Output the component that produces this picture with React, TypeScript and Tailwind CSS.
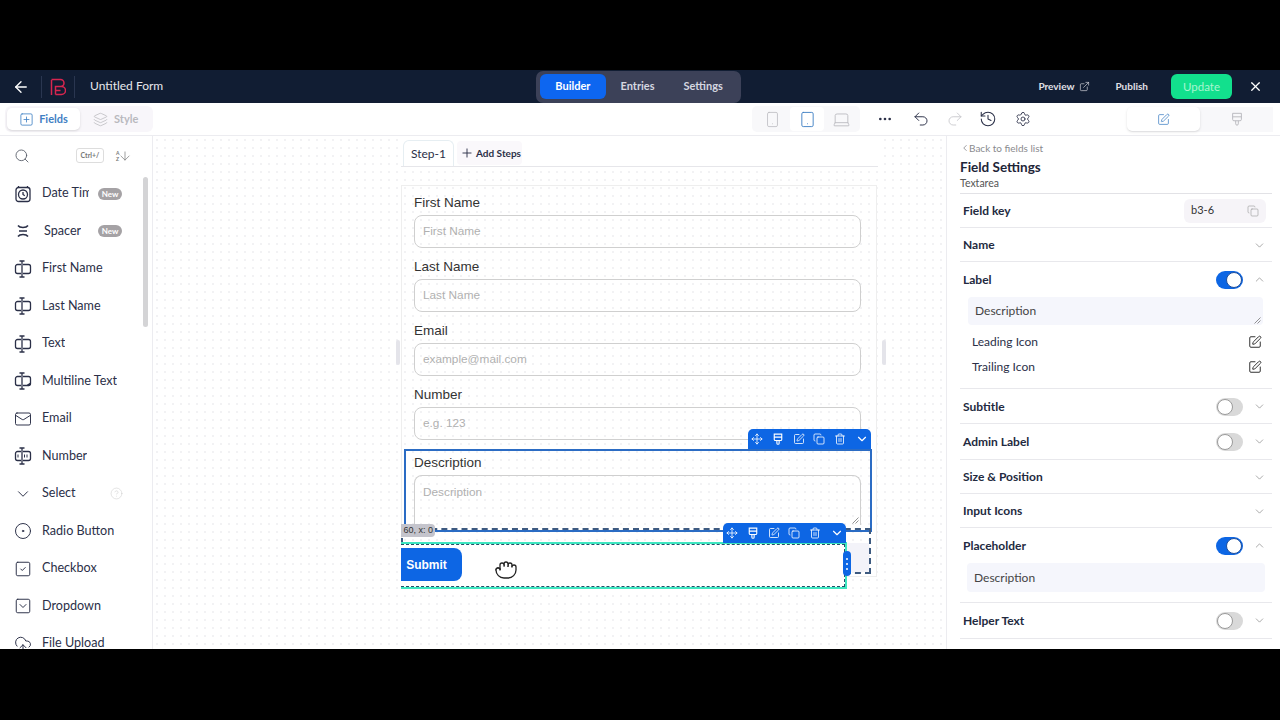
import {
  ArrowLeft,
  ArrowDown,
  ChevronDown,
  ChevronLeft,
  ChevronUp,
  CircleDot,
  CircleHelp,
  CloudUpload,
  Copy,
  ExternalLink,
  Grab,
  History,
  Laptop,
  Layers,
  Mail,
  MoreHorizontal,
  Move,
  Plus,
  Redo2,
  Search,
  Settings,
  Smartphone,
  SquareCheck,
  SquareChevronDown,
  SquarePen,
  SquarePlus,
  Tablet,
  Trash2,
  Undo2,
  X,
} from "lucide-react";
import type { ReactNode } from "react";

function Logo() {
  return (
    <svg width="16" height="18" viewBox="0 0 16 18" fill="none" stroke="#d8264f" strokeWidth="1.500">
      <path d="M1.500 2v15M1.500 1.500h9a3 3 0 0 1 0 7h-5v8M5.500 8.500h6a4 4 0 0 1 0 8h-6M5.500 12.500h5" />
    </svg>
  );
}

function BrushIcon({ size = 12, color = "white", width = 1.5 }: { size?: number; color?: string; width?: number }) {
  return (
    <svg width={size} height={size} viewBox="0 0 16 16" fill="none" stroke={color} strokeWidth={width}>
      <path d="M3 1.500h10v7a1.500 1.500 0 0 1-1.500 1.500h-7A1.500 1.500 0 0 1 3 8.500zM3 5.500h10M6.500 10v3.500a1.500 1.500 0 0 0 3 0V10" />
    </svg>
  );
}

function ResizeGrip({ className }: { className: string }) {
  return (
    <svg width="7" height="7" viewBox="0 0 7 7" fill="none" stroke="#777777" strokeWidth="0.800" className={`absolute ${className}`}>
      <path d="M0.500 6.500l6-6M3.500 6.500l3-3" />
    </svg>
  );
}

function InputIcon({ multi, digits }: { multi?: boolean; digits?: boolean }) {
  return (
    <svg width="18" height="18" viewBox="0 0 18 18" fill="none" stroke="#2b3048" strokeWidth="1.300">
      <path d="M7 4.500H3.500a2 2 0 0 0-2 2v5a2 2 0 0 0 2 2H7M9 4.500h5.500a2 2 0 0 1 2 2v5a2 2 0 0 1-2 2H9M8 1v16M5.500 1h5M5.500 17h5" />
      {multi && <path d="M16.500 11.500l-3 2" strokeWidth="2" />}
      {digits && <path d="M4 7.500v3M10.500 7.500v3M13 7.500v3" strokeWidth="1" />}
    </svg>
  );
}

function DateIcon() {
  return (
    <svg width="16" height="18" viewBox="0 0 16 18" fill="none" stroke="#2b3048" strokeWidth="1.300">
      <rect x="1" y="2.500" width="14" height="14" rx="2.500" />
      <path d="M3.500 1v2M12.500 1v2" />
      <circle cx="8" cy="9.500" r="4.500" />
      <path d="M8 7v2.500l1.800 1.200" />
    </svg>
  );
}

function SpacerIcon() {
  return (
    <svg width="14" height="14" viewBox="0 0 14 14" fill="none" stroke="#2b3048" strokeWidth="1.500">
      <path d="M2 1.500c1 1.500 2 2 5 2s4-.5 5-2M2 12.500c1-1.500 2-2 5-2s4 .5 5 2M3 7h8" />
    </svg>
  );
}

const stroke = { size: 18, strokeWidth: 1.3, color: "#2b3048" };

const FIELDS: { name: string; icon: ReactNode; badge?: "new" | "help"; clip?: boolean; indent?: boolean }[] = [
  { name: "Date Time", icon: <DateIcon />, badge: "new", clip: true },
  { name: "Spacer", icon: <SpacerIcon />, badge: "new", indent: true },
  { name: "First Name", icon: <InputIcon /> },
  { name: "Last Name", icon: <InputIcon /> },
  { name: "Text", icon: <InputIcon /> },
  { name: "Multiline Text", icon: <InputIcon multi /> },
  { name: "Email", icon: <Mail {...stroke} /> },
  { name: "Number", icon: <InputIcon digits /> },
  { name: "Select", icon: <ChevronDown {...stroke} /> , badge: "help" },
  { name: "Radio Button", icon: <CircleDot {...stroke} /> },
  { name: "Checkbox", icon: <SquareCheck {...stroke} /> },
  { name: "Dropdown", icon: <SquareChevronDown {...stroke} /> },
  { name: "File Upload", icon: <CloudUpload {...stroke} /> },
];

function FieldsPanel() {
  return (
    <aside className="relative w-[153px] shrink-0 overflow-hidden border-r border-[#ececf0]">
      <div className="flex h-[39px] items-center pl-[14px]">
        <Search size={16} strokeWidth={1.3} color="#555a66" />
        <span className="ml-[46px] flex h-[15px] w-[28px] items-center justify-center rounded-[3px] border border-[#dddddd] text-[7px] font-bold text-[#777777]">
          Ctrl+/
        </span>
        <span className="ml-[12px] flex items-center text-[#777777]">
          <span className="flex flex-col text-[5px] font-bold leading-[6px]">
            <span>A</span>
            <span>Z</span>
          </span>
          <ArrowDown size={14} strokeWidth={1.2} color="#777777" className="-ml-[1px]" />
        </span>
      </div>
      {FIELDS.map((f) => (
        <div key={f.name} className="flex h-[37.5px] items-center">
          <span className="flex w-[42px] shrink-0 justify-center pl-[14px] pr-[10px]">{f.icon}</span>
          <span
            className={`overflow-hidden whitespace-nowrap text-[12.600px] text-[#2b3048] ${
              f.clip ? "w-[47px]" : ""
            } ${f.indent ? "ml-[2px]" : ""}`}
          >
            {f.name}
          </span>
          {f.badge === "new" && (
            <span
              className={`flex h-[12px] w-[24px] items-center justify-center rounded-full bg-[#a5a2a5] text-[8px] font-bold text-white ${
                f.clip ? "ml-[9px]" : "ml-[17px]"
              }`}
            >
              New
            </span>
          )}
          {f.badge === "help" && <CircleHelp size={13} strokeWidth={1} color="#cccccc" className="ml-[34px]" />}
        </div>
      ))}
      <div className="absolute left-[143px] top-[41px] h-[150px] w-[5px] rounded-full bg-[#d4d4d6]" />
    </aside>
  );
}

function FormField({ label, placeholder }: { label: string; placeholder: string }) {
  return (
    <div className="h-[64px] px-[12px] pt-[8px]">
      <div className="h-[21px] text-[13.500px] leading-[18px] text-[#333333]">{label}</div>
      <div className="flex h-[33px] w-[447px] items-center rounded-[8px] border border-[#cfcfcf] px-[8px] text-[11.800px] text-[#b0b0b0]">
        {placeholder}
      </div>
    </div>
  );
}

function FieldToolbar({ className }: { className: string }) {
  const s = { size: 12, strokeWidth: 1.6, color: "white" };
  return (
    <div className={`absolute flex h-[20px] w-[123px] items-center justify-between rounded-t-[5px] bg-[#0d66e4] pl-[3px] pr-[2px] ${className}`}>
      <Move {...s} />
      <BrushIcon />
      <SquarePen {...s} />
      <Copy {...s} />
      <Trash2 {...s} />
      <ChevronDown size={14} strokeWidth={2} color="white" />
    </div>
  );
}

function Canvas() {
  return (
    <main className="relative flex-1 overflow-hidden bg-[radial-gradient(#f2f2f4_1px,transparent_1px)] bg-[length:8px_8px] pl-[248px]">
      <div className="flex h-[31px] w-[477px] items-end border-b border-[#e6e6ea] bg-white">
        <span className="ml-[2px] flex h-[26px] w-[51px] items-center justify-center rounded-t-[6px] border border-b-0 border-[#e6eef2] text-[12px] text-[#2b3048]">
          Step-1
        </span>
        <span className="mb-[1px] ml-[3px] flex h-[24px] w-[65px] items-center gap-[2px] whitespace-nowrap rounded-[4px] bg-[#faf8fb] pl-[3px] text-[10px] font-bold text-[#2b3048]">
          <Plus size={14} strokeWidth={1.6} />
          Add Steps
        </span>
      </div>

      <div className="relative mt-[18px] h-[392px] w-[476px] border border-[#eeeeee] font-['Liberation_Sans',sans-serif]">
        <FormField label="First Name" placeholder="First Name" />
        <FormField label="Last Name" placeholder="Last Name" />
        <FormField label="Email" placeholder="example@mail.com" />
        <FormField label="Number" placeholder="e.g. 123" />

        <div className="ml-[2px] mt-[7px] h-[83px] w-[468px] border-2 border-[#2b6cc4] px-[8px] pt-[3px]">
          <div className="h-[21px] text-[13.500px] leading-[18px] text-[#333333]">Description</div>
          <div className="relative h-[50px] w-[447px] rounded-t-[8px] border border-b-0 border-[#cfcfcf] px-[8px] pt-[8px] text-[11.800px] text-[#b0b0b0]">
            Description
            <ResizeGrip className="bottom-[1px] right-[1px]" />
          </div>
        </div>

        <FieldToolbar className="left-[346px] top-[243px]" />

        {/* element being dragged: drop slot, ghost and its own toolbar */}
        <div className="absolute left-[-1px] top-[342px] h-[46px] w-[470px] border-2 border-dashed border-[#3d5a80]">
          <div className="ml-auto mt-[13px] h-[29px] w-[23px] bg-[#f3f3f9]" />
        </div>
        <div className="absolute left-[-1px] top-[356px] h-[47px] w-[446px] border-y-2 border-r-2 border-[#3ee6c0] bg-white">
          <div className="h-full border-y border-r border-dashed border-[#24506a]">
            <div className="mt-[3px] flex h-[33px] w-[61px] items-center justify-center rounded-r-[8px] bg-[#0d66e4] pr-[10px] text-[12px] font-bold text-white">
              Submit
            </div>
          </div>
        </div>
        <FieldToolbar className="left-[321px] top-[337px]" />
        <div className="absolute left-[-1px] top-[338px] flex h-[13px] w-[34px] items-center justify-end overflow-hidden whitespace-nowrap rounded-r-[4px] bg-[#c4c4cc] pr-[2px] text-[9px] text-[#333333]">
          y: 60, x: 0
        </div>
        <div className="absolute left-[441px] top-[365px] flex h-[25px] w-[8px] flex-col items-center justify-center gap-[3px] rounded-full bg-[#0d66e4]">
          <span className="h-[2px] w-[2px] rounded-full bg-white" />
          <span className="h-[2px] w-[2px] rounded-full bg-white" />
          <span className="h-[2px] w-[2px] rounded-full bg-white" />
        </div>
        <Grab size={24} strokeWidth={1.3} color="#222222" fill="white" className="absolute left-[92px] top-[370px]" />
      </div>

      <div className="absolute left-[243px] top-[204px] h-[25px] w-[4px] rounded-full bg-[#e4e4ea]" />
      <div className="absolute left-[729px] top-[204px] h-[25px] w-[4px] rounded-full bg-[#e4e4ea]" />
    </main>
  );
}

function Toggle({ on }: { on?: boolean }) {
  return (
    <span
      className={`mr-[9px] flex h-[18px] w-[27px] items-center rounded-full ${
        on ? "justify-end bg-[#0d66e4] pr-[1px]" : "justify-start bg-[#d9d9d9] pl-[1px]"
      }`}
    >
      <span className={`h-[16px] w-[16px] rounded-full bg-white ${on ? "border border-[#1f4f9c]" : "border border-[#9a9a9a]"}`} />
    </span>
  );
}

function SettingRow({
  label,
  h,
  toggle,
  open,
  children,
}: {
  label: string;
  h: string;
  toggle?: "on" | "off";
  open?: boolean;
  children?: ReactNode;
}) {
  return (
    <div className={`border-b border-[#e8e8ec] ${h}`}>
      <div className={`flex items-center pl-[3px] ${toggle ? "h-[35px]" : "h-[34px]"}`}>
        <span className="flex-1 text-[12px] font-bold text-[#232a40]">{label}</span>
        {toggle && <Toggle on={toggle === "on"} />}
        <span className="mr-[6px] flex w-[14px] justify-center">
          {open ? (
            <ChevronUp size={13} strokeWidth={1.3} color="#888888" />
          ) : (
            <ChevronDown size={13} strokeWidth={1.3} color="#888888" />
          )}
        </span>
      </div>
      {children}
    </div>
  );
}

function IconLine({ label }: { label: string }) {
  return (
    <div className="flex h-[25px] items-center pl-[12px] pr-[10px] text-[12px] text-[#2b3048]">
      <span className="flex-1">{label}</span>
      <SquarePen size={14} strokeWidth={1.6} color="#222222" />
    </div>
  );
}

function SettingsPanel() {
  return (
    <aside className="w-[334px] shrink-0 overflow-hidden border-l border-[#ececf0] pl-[13px] pr-[8px]">
      <div className="h-[58px] border-b border-[#e2e2e6] pt-[5px]">
        <div className="flex h-[14px] items-center text-[10px] text-[#8a8a8e]">
          <ChevronLeft size={10} />
          <span className="ml-[-1px]">Back to fields list</span>
        </div>
        <div className="mt-[3px] text-[13.500px] font-bold leading-[18px] text-[#1e2538]">Field Settings</div>
        <div className="text-[10.500px] leading-[14px] text-[#555555]">Textarea</div>
      </div>

      <div className="flex h-[34px] items-center border-b border-[#e8e8ec] pl-[3px]">
        <span className="flex-1 text-[12px] font-bold text-[#232a40]">Field key</span>
        <span className="mr-[6px] flex h-[24px] w-[82px] items-center justify-between rounded-[6px] bg-[#f6f4f8] px-[7px] text-[11px] text-[#333333]">
          b3-6
          <Copy size={12} strokeWidth={1.2} color="#999999" />
        </span>
      </div>
      <SettingRow label="Name" h="h-[34px]" />
      <SettingRow label="Label" h="h-[127px]" toggle="on" open>
        <div className="relative ml-[8px] flex h-[28px] w-[295px] items-center rounded-[4px] bg-[#f5f6fc] pl-[7px] text-[12px] text-[#444444]">
          Description
          <ResizeGrip className="bottom-[1px] right-[2px]" />
        </div>
        <div className="mt-[4px]">
          <IconLine label="Leading Icon" />
          <IconLine label="Trailing Icon" />
        </div>
      </SettingRow>
      <SettingRow label="Subtitle" h="h-[35px]" toggle="off" />
      <SettingRow label="Admin Label" h="h-[36px]" toggle="off" />
      <SettingRow label="Size & Position" h="h-[34px]" />
      <SettingRow label="Input Icons" h="h-[34px]" />
      <SettingRow label="Placeholder" h="h-[75px]" toggle="on" open>
        <div className="ml-[7px] flex h-[29px] w-[298px] items-center rounded-[4px] bg-[#f5f6fc] pl-[7px] text-[12px] text-[#444444]">
          Description
        </div>
      </SettingRow>
      <SettingRow label="Helper Text" h="h-[36px]" toggle="off" />
    </aside>
  );
}

function Header() {
  return (
    <header className="flex h-[33px] items-center bg-[#111d33] text-white">
      <span className="flex h-[22px] w-[42px] items-center justify-center border-r border-[#2a3650]">
        <ArrowLeft size={18} strokeWidth={1.8} />
      </span>
      <span className="flex h-[22px] w-[33px] items-center justify-center border-r border-[#2a3650]">
        <Logo />
      </span>
      <span className="mb-[2px] ml-[15px] w-[72px] whitespace-nowrap text-[12px] text-[#e8e8ec]">Untitled Form</span>

      <nav className="ml-[374px] flex h-[32px] w-[205px] items-center rounded-[7px] bg-[#3c4158] px-[4px] text-[11px] font-bold text-[#d5d7e0]">
        <span className="flex h-[25px] w-[66px] items-center justify-center rounded-[6px] bg-[#0d66f0] text-white">Builder</span>
        <span className="w-[64px] text-center">Entries</span>
        <span className="w-[68px] text-center">Settings</span>
      </nav>

      <span className="ml-auto flex items-center gap-[5px] text-[10px] font-bold text-[#e0e0e6]">
        Preview
        <ExternalLink size={11} strokeWidth={1.4} />
      </span>
      <span className="ml-[25px] text-[10px] font-bold text-[#e0e0e6]">Publish</span>
      <span className="ml-[23px] flex h-[25px] w-[61px] items-center justify-center rounded-[6px] bg-[#12e08d] text-[11.500px] text-[#a8f5d0]">
        Update
      </span>
      <span className="ml-[16px] mr-[17px]">
        <X size={15} strokeWidth={2} color="white" />
      </span>
    </header>
  );
}

function Toolbar() {
  return (
    <div className="flex h-[33px] items-center border-b border-[#ececf0] bg-white">
      <div className="ml-[5px] flex h-[26px] w-[148px] items-center rounded-[6px] bg-[#f8f6fa] pl-[2px]">
        <span className="flex h-[22px] w-[73px] items-center justify-center gap-[5px] rounded-[5px] bg-white text-[11px] font-bold text-[#3f80c4] shadow-sm">
          <SquarePlus size={15} strokeWidth={1.3} color="#3f80c4" />
          Fields
        </span>
        <span className="ml-[13px] flex items-center gap-[6px] text-[11px] font-bold text-[#b9b9be]">
          <Layers size={15} strokeWidth={1.2} color="#b9b9be" />
          Style
        </span>
      </div>

      <div className="ml-[599px] flex h-[26px] w-[108px] items-center rounded-[5px] bg-[#f8f8fa] pl-[2px]">
        <span className="flex w-[36px] justify-center">
          <Smartphone size={17} strokeWidth={1.1} color="#b9b9be" />
        </span>
        <span className="flex h-[24px] w-[34px] items-center justify-center rounded-[4px] bg-white">
          <Tablet size={17} strokeWidth={1.3} color="#3f80c4" />
        </span>
        <span className="flex w-[34px] justify-center">
          <Laptop size={19} strokeWidth={1.1} color="#b9b9be" />
        </span>
      </div>

      <MoreHorizontal size={16} strokeWidth={2} color="#2b3048" className="ml-[17px]" />
      <Undo2 size={18} strokeWidth={1.3} color="#2b3048" className="ml-[19px]" />
      <Redo2 size={18} strokeWidth={1.1} color="#c4c4c8" className="ml-[16px]" />
      <History size={18} strokeWidth={1.4} color="#2b3048" className="ml-[15px]" />
      <Settings size={16} strokeWidth={1.3} color="#2b3048" className="ml-[18px]" />

      <div className="ml-[96px] flex h-[25px] w-[146px] items-center rounded-l-[6px] bg-[#f8f8fa]">
        <span className="flex h-[24px] w-[73px] items-center justify-center rounded-[5px] bg-white shadow-sm">
          <SquarePen size={13} strokeWidth={1.4} color="#3f80c4" />
        </span>
        <span className="flex w-[73px] justify-center">
          <BrushIcon size={14} color="#b9b9be" width={1.1} />
        </span>
      </div>
    </div>
  );
}

export default function App() {
  return (
    <div className="flex h-[720px] w-[1280px] flex-col overflow-hidden bg-black py-[70px] font-['Lato','Noto_Sans',sans-serif]">
      <div className="flex h-[579px] flex-col bg-white">
        <Header />
        <Toolbar />
        <div className="flex min-h-0 flex-1">
          <FieldsPanel />
          <Canvas />
          <SettingsPanel />
        </div>
      </div>
    </div>
  );
}
